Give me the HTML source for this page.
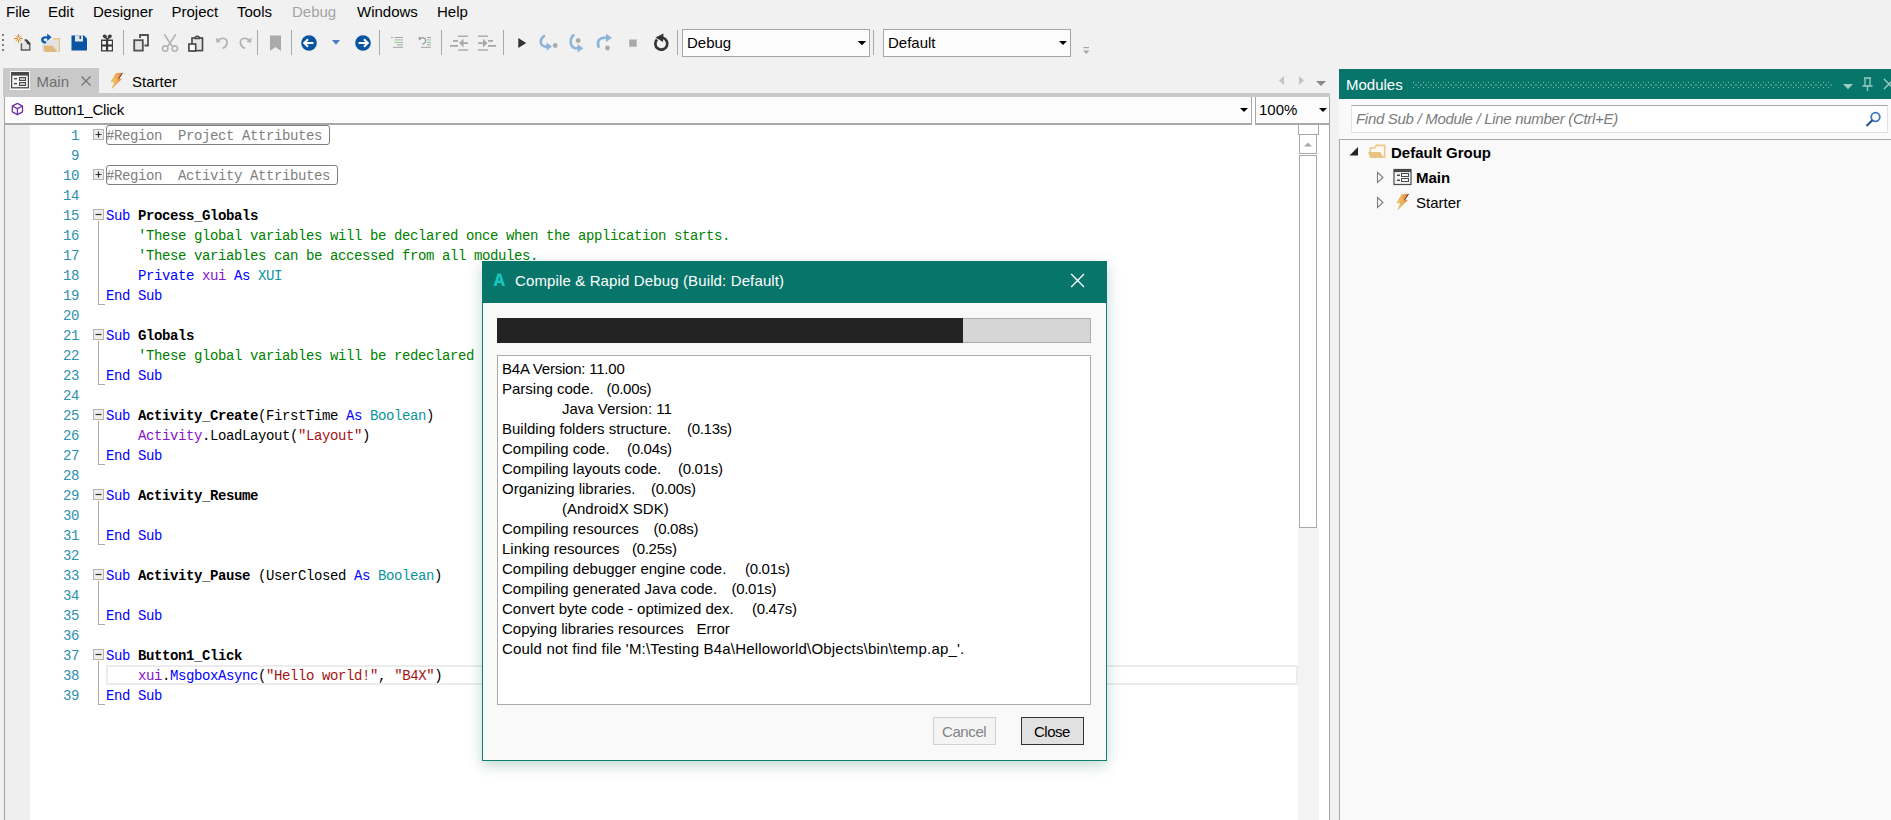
<!DOCTYPE html><html><head><meta charset="utf-8"><style>
*{margin:0;padding:0;box-sizing:border-box}
html,body{width:1891px;height:820px;overflow:hidden;background:#f1f1f1;font-family:"Liberation Sans",sans-serif;font-size:14.5px;color:#000}
.a{position:absolute;white-space:pre}
.ui{font-family:"Liberation Sans",sans-serif;font-size:15px;line-height:17px}
.code{position:absolute;left:106px;font-family:"Liberation Mono",monospace;font-size:14px;letter-spacing:-0.4px;line-height:20px;height:20px;white-space:pre;color:#000}
.ln{position:absolute;left:40px;width:39px;text-align:right;font-family:"Liberation Mono",monospace;font-size:14px;letter-spacing:-0.4px;line-height:20px;color:#2b91af;white-space:pre}
.kw{color:#0000ff}.cm{color:#008000}.st{color:#a31515}.ty{color:#0c949b}.pu{color:#8515c7}.b{font-weight:bold}.rg{color:#808080}
.fold{position:absolute;left:93px;width:11px;height:11px;border:1px solid #b5b5b5;background:#ededed}
.log{position:absolute;left:502px;font-size:14.5px;line-height:20px;white-space:pre}
</style></head><body>
<div class="a ui" style="left:6px;top:3px;color:#000">File</div>
<div class="a ui" style="left:48px;top:3px;color:#000">Edit</div>
<div class="a ui" style="left:93px;top:3px;color:#000">Designer</div>
<div class="a ui" style="left:171.5px;top:3px;color:#000">Project</div>
<div class="a ui" style="left:237px;top:3px;color:#000">Tools</div>
<div class="a ui" style="left:292px;top:3px;color:#a3a3a3">Debug</div>
<div class="a ui" style="left:357px;top:3px;color:#000">Windows</div>
<div class="a ui" style="left:437px;top:3px;color:#000">Help</div>
<svg class="a" style="left:0;top:0" width="1100" height="62" viewBox="0 0 1100 62">
<g fill="#7e7e7e"><rect x="2" y="34" width="2" height="2"/><rect x="2" y="39" width="2" height="2"/><rect x="2" y="44" width="2" height="2"/><rect x="2" y="49" width="2" height="2"/></g>
<!-- new -->
<g stroke="#d4862a" stroke-width="1.2"><line x1="18.5" y1="34.2" x2="18.5" y2="42.8"/><line x1="14.2" y1="38.5" x2="22.8" y2="38.5"/></g>
<g stroke="#e2a458" stroke-width="1"><line x1="15.6" y1="35.6" x2="21.4" y2="41.4"/><line x1="21.4" y1="35.6" x2="15.6" y2="41.4"/></g>
<circle cx="18.5" cy="38.5" r="0.9" fill="#fff"/>
<path d="M21.4 43.2 V50 H29.8 V43.6 L26.6 40.3 H24.6" fill="#e4e4e4" stroke="#5c5c5c" stroke-width="1.4"/>
<path d="M24.6 39.6 H26.8 L30.2 43 V44.5 H27.6 Z" fill="#444"/>
<!-- open -->
<path d="M42.3 40.2 H58.4 V51.9 H42.3 Z" fill="#e2e2e2"/>
<path d="M52.5 38.7 H59.3 V52" fill="none" stroke="#e3c38e" stroke-width="1.4"/>
<path d="M43.3 45.7 H52.8 L57.2 52 H44.8 Z" fill="#e0b878"/>
<path d="M45.2 42.4 C41.3 41.8 41.2 37.6 45.6 37.4 H48.2" stroke="#0f5eb0" stroke-width="2.4" fill="none" stroke-linecap="round"/>
<path d="M47.2 33.6 L51.6 37.3 L47.2 41 Z" fill="#0f5eb0"/>
<!-- save -->
<path d="M71.5 35.5 H84 L87 38.5 V50.5 H71.5 Z" fill="#0a54a4"/>
<rect x="75" y="35.5" width="8" height="6" fill="#e6e6e6"/><rect x="79.5" y="36" width="1.6" height="3" fill="#0a54a4"/>
<!-- gift -->
<path d="M101 39.5 H113 V51.5 H101 Z" fill="#3c3c3c"/>
<g fill="#fff"><rect x="102.3" y="41" width="3.6" height="3.4"/><rect x="108.2" y="41" width="3.6" height="3.4"/><rect x="102.3" y="46.6" width="3.6" height="3.6"/><rect x="108.2" y="46.6" width="3.6" height="3.6"/></g>
<ellipse cx="104.8" cy="36.4" rx="2.1" ry="1.7" fill="#3c3c3c" transform="rotate(25 104.8 36.4)"/><ellipse cx="109.8" cy="36.4" rx="2.1" ry="1.7" fill="#3c3c3c" transform="rotate(-25 109.8 36.4)"/><path d="M107.3 39.5 L104.8 36.4 M107.3 39.5 L109.8 36.4" stroke="#3c3c3c" stroke-width="1.6"/>
<!-- separators -->
<g fill="#a9a9a9"><rect x="123" y="30" width="1" height="25"/><rect x="257" y="30" width="1" height="25"/><rect x="291" y="30" width="1" height="25"/><rect x="379" y="30" width="1" height="25"/><rect x="441" y="30" width="1" height="25"/><rect x="503" y="30" width="1" height="25"/><rect x="677" y="30" width="1" height="25"/><rect x="873" y="30" width="1" height="25"/></g>
<!-- copy -->
<path d="M140 38 V35 H148 V45.5 H144.5" fill="none" stroke="#505050" stroke-width="1.8"/>
<rect x="134.2" y="40.2" width="8.6" height="10.4" fill="#e4e4e4" stroke="#505050" stroke-width="1.8"/>
<!-- cut -->
<g stroke="#b4b4b4" stroke-width="1.6" fill="none"><path d="M164.2 34.2 L172.2 46.2 M175.8 34.2 L167.8 46.2"/><circle cx="165.2" cy="48.6" r="2.7"/><circle cx="174.8" cy="48.6" r="2.7"/></g>
<!-- paste -->
<rect x="192" y="38" width="10.5" height="12.6" fill="#e6e6e6" stroke="#454545" stroke-width="1.6"/>
<path d="M195.2 38.6 V37.2 A3 3 0 0 1 199.4 37.2 V38.6 Z" fill="#e6e6e6" stroke="#454545" stroke-width="1.5"/>
<rect x="188.9" y="44" width="6.8" height="7" fill="#f8f8f8" stroke="#454545" stroke-width="1.6"/>
<!-- undo/redo -->
<path d="M217.5 41 C221 36.5 228 38 227 43.5 C226.5 46 224.5 47.5 222.5 48.5" fill="none" stroke="#b4b4b4" stroke-width="1.8"/>
<path d="M216 37.5 L216.5 43 L221 41.5 Z" fill="#b4b4b4"/>
<path d="M250 41 C246.5 36.5 239.5 38 240.5 43.5 C241 46 243 47.5 245 48.5" fill="none" stroke="#b4b4b4" stroke-width="1.8"/>
<path d="M251.5 37.5 L251 43 L246.5 41.5 Z" fill="#b4b4b4"/>
<!-- bookmark -->
<path d="M270 35.5 H281 V51 L275.5 47 L270 51 Z" fill="#aaaaaa"/>
<!-- back/forward -->
<circle cx="309" cy="43" r="7.8" fill="#0a54a4"/>
<path d="M304.2 43 H313.5 M308 39.2 L304.2 43 L308 46.8" stroke="#fff" stroke-width="2" fill="none"/>
<path d="M332 40 H340 L336 44.8 Z" fill="#4b7ec2"/>
<circle cx="363" cy="43" r="7.8" fill="#0a54a4"/>
<path d="M358.5 43 H367.8 M364 39.2 L367.8 43 L364 46.8" stroke="#fff" stroke-width="2" fill="none"/>
<!-- comment -->
<g stroke-width="1" fill="none">
<path d="M391 37.5 H393 M394.5 37.5 H403" stroke="#a3a3a3"/>
<path d="M394.5 39.9 H403 M394.5 42.4 H403" stroke="#8fc48f"/>
<path d="M397 44.8 H403 M393 47.3 H403" stroke="#a3a3a3"/>
<path d="M427 37.5 H431 M427 44.8 H431 M421 47.3 H431" stroke="#a3a3a3"/>
<path d="M427 39.9 H431 M427 42.4 H431" stroke="#8fc48f"/>
<path d="M420 38.5 C424 36 427 39.5 425 42.5 L422.5 44.5" stroke="#9a9a9a" stroke-width="1.2"/>
</g>
<path d="M418.5 36.5 L419 40.5 L422 38.5 Z" fill="#9a9a9a"/>
<!-- outdent / indent -->
<g fill="#a8a8a8">
<rect x="458" y="35.5" width="10" height="1.4"/><rect x="453" y="40" width="5" height="1.8"/><rect x="450" y="45" width="8" height="1.8"/><rect x="458" y="49.3" width="10" height="1.4"/>
<rect x="461" y="42.2" width="7" height="1.8"/><path d="M459 43.1 L463.5 38.8 V47.4 Z"/>
<rect x="478" y="35.5" width="10" height="1.4"/><rect x="488" y="40" width="5" height="1.8"/><rect x="488" y="45" width="8" height="1.8"/><rect x="478" y="49.3" width="10" height="1.4"/>
<rect x="478" y="42.2" width="7" height="1.8"/><path d="M487.5 43.1 L483 38.8 V47.4 Z"/>
</g>
<!-- play -->
<path d="M518.3 38 L526.2 43 L518.3 48 Z" fill="#333"/>
<!-- step over/into/out -->
<g fill="none" stroke="#8db4d9" stroke-width="2.6" stroke-linecap="round">
<path d="M544 36.2 C539.5 39 539.5 45.5 545 46.6 H547.5"/>
<path d="M573.5 35.3 C569.5 38.5 569.5 47.5 575.5 48.3 H578.5"/>
<path d="M598.6 46.8 C596.5 41.5 599.5 37.8 604.5 37.8 H607"/>
</g>
<g fill="#8db4d9"><path d="M546.5 42.5 L552 46.6 L546.5 50.7 Z"/><path d="M577.5 44.2 L583.5 48.3 L577.5 52.4 Z"/><path d="M606 33.7 L612 37.8 L606 41.9 Z"/></g>
<g fill="#a9a9a9"><circle cx="555.2" cy="45.5" r="2.4"/><circle cx="578.2" cy="40.6" r="2.4"/><circle cx="607.5" cy="48" r="2.4"/></g>
<rect x="629.2" y="39.5" width="7.5" height="7.2" fill="#aaaaaa"/>
<!-- restart -->
<path d="M657 39.5 A6 6 0 1 0 662.5 37.8" fill="none" stroke="#333" stroke-width="2.7"/>
<path d="M663.5 33.5 L655.5 37.5 L663 42 Z" fill="#333"/>
<!-- combo arrows -->
<path d="M858 41 H866 L862 45 Z" fill="#000"/>
<path d="M1059 41 H1067 L1063 45 Z" fill="#000"/>
<rect x="1083.5" y="47" width="5.5" height="1.2" fill="#a6a6a6"/>
<path d="M1083 50.5 H1089.5 L1086.25 54 Z" fill="#a6a6a6"/>
</svg>
<div class="a" style="left:682px;top:29px;width:188px;height:28px;border:1px solid #a5a5a5;background:#fcfcfc"></div>
<svg class="a" style="left:0;top:0" width="1100" height="62"><path d="M858 41 H866 L862 45 Z" fill="#000"/><path d="M1059 41 H1067 L1063 45 Z" fill="#000"/></svg>
<div class="a ui" style="left:687px;top:34px">Debug</div>
<div class="a" style="left:883px;top:29px;width:188px;height:28px;border:1px solid #a5a5a5;background:#fcfcfc"></div>
<svg class="a" style="left:0;top:0" width="1100" height="62"><path d="M858 41 H866 L862 45 Z" fill="#000"/><path d="M1059 41 H1067 L1063 45 Z" fill="#000"/></svg>
<div class="a ui" style="left:888px;top:34px">Default</div>
<div class="a" style="left:3px;top:68px;width:96px;height:25px;background:#c9c9c9"></div>
<div class="a" style="left:3px;top:93px;width:1327px;height:4px;background:#c9c9c9"></div>
<svg class="a" style="left:0;top:60px" width="1340" height="36" viewBox="0 60 1340 36">
<rect x="10" y="71" width="20" height="19" fill="#fff"/>
<rect x="11.6" y="72.6" width="16.8" height="15.2" fill="#f8f8f8" stroke="#484848" stroke-width="1.3"/>
<rect x="11" y="72" width="18" height="3.6" fill="#484848"/>
<g fill="#484848"><rect x="14" y="78" width="3" height="1.4"/><rect x="14" y="83" width="3" height="1.4"/></g>
<g fill="#c6c6c6" stroke="#484848" stroke-width="1"><rect x="19.5" y="77.5" width="6" height="3"/><rect x="19.5" y="82.5" width="6" height="3"/></g>
<path d="M81.5 76.5 L90.5 85.5 M90.5 76.5 L81.5 85.5" stroke="#777" stroke-width="1.4"/>
<defs><linearGradient id="lg" x1="0" y1="0" x2="1" y2="0"><stop offset="0" stop-color="#e9d65a"/><stop offset="0.55" stop-color="#f6a25a"/><stop offset="1" stop-color="#ec5a4a"/></linearGradient></defs>
<path d="M116 73.5 L122.5 73 L118.5 79 L121.5 79 L112 88.5 L114.8 81.8 L111 81.8 Z" fill="url(#lg)" stroke="#caa040" stroke-width="0.5"/>
<path d="M122.5 73 L118.5 79" stroke="#554422" stroke-width="1"/>
<path d="M1284 76 V85 L1279 80.5 Z" fill="#c4c4c4"/>
<path d="M1299 76 V85 L1304 80.5 Z" fill="#c4c4c4"/>
<path d="M1316 81 H1326 L1321 86 Z" fill="#8a8a8a"/>
</svg>
<div class="a ui" style="left:36.5px;top:73px;color:#6f6f6f">Main</div>
<div class="a ui" style="left:132px;top:73px">Starter</div>
<div class="a" style="left:4px;top:97px;width:1326px;height:723px;background:#fff;border-left:1px solid #a0a0a0;border-right:1px solid #a0a0a0"></div>
<div class="a" style="left:5px;top:125px;width:25px;height:695px;background:#efefef"></div>
<div class="a" style="left:4px;top:97px;width:1248px;height:28px;background:#fcfcfc;border-left:1px solid #a8a8a8;border-right:1px solid #a8a8a8;border-bottom:2px solid #a8a8a8"></div>
<div class="a" style="left:1255px;top:97px;width:75px;height:28px;background:#fcfcfc;border-left:1px solid #a8a8a8;border-right:1px solid #a8a8a8;border-bottom:2px solid #a8a8a8"></div>
<svg class="a" style="left:0;top:96px" width="1340" height="32" viewBox="0 96 1340 32">
<g fill="none" stroke="#6d2ea6" stroke-width="1.25" stroke-linejoin="round"><path d="M17.4 103.4 L22.5 106.1 V111.9 L17.4 114.6 L12.3 111.9 V106.1 Z"/><path d="M12.6 106.3 L17.4 108.6 L22.2 106.3 M17.4 108.6 V114.4"/></g>
<path d="M1240 108 H1248 L1244 112 Z" fill="#000"/>
<path d="M1319 108 H1327 L1323 112 Z" fill="#000"/>
</svg>
<div class="a ui" style="left:34px;top:101px;letter-spacing:-0.2px">Button1_Click</div>
<div class="a ui" style="left:1259px;top:101px">100%</div>
<div class="a" style="left:1298px;top:125px;width:21px;height:10px;border:1px solid #a8a8a8;border-top:0;background:#fff"></div>
<div class="a" style="left:1299px;top:134px;width:18px;height:20px;border:1px solid #a8a8a8;background:#fff"></div>
<svg class="a" style="left:1299px;top:134px" width="18" height="20"><path d="M5 12.5 H13 L9 8.5 Z" fill="#a6a6a6"/></svg>
<div class="a" style="left:1299px;top:155px;width:18px;height:373px;border:1px solid #a8a8a8;background:#fff"></div>
<div class="a" style="left:1298px;top:528px;width:21px;height:292px;background:#f3f3f3"></div>
<div class="a" style="left:106px;top:665px;width:1192px;height:20px;border:2px solid #ececec"></div>
<div class="ln" style="top:126px">1</div>
<div class="a" style="left:106px;top:125px;width:224px;height:20px;border:1px solid #7d7d7d;border-radius:3px"></div>
<div class="code rg" style="top:126px">#Region  Project Attributes</div>
<div class="fold" style="top:129px"></div>
<svg class="a" style="left:93px;top:129px" width="11" height="11"><path d="M2.5 5.5 H8.5 M5.5 2.5 V8.5" stroke="#333" stroke-width="1.2"/></svg>
<div class="ln" style="top:146px">9</div>
<div class="ln" style="top:166px">10</div>
<div class="a" style="left:106px;top:165px;width:232px;height:20px;border:1px solid #7d7d7d;border-radius:3px"></div>
<div class="code rg" style="top:166px">#Region  Activity Attributes</div>
<div class="fold" style="top:169px"></div>
<svg class="a" style="left:93px;top:169px" width="11" height="11"><path d="M2.5 5.5 H8.5 M5.5 2.5 V8.5" stroke="#333" stroke-width="1.2"/></svg>
<div class="ln" style="top:186px">14</div>
<div class="ln" style="top:206px">15</div>
<div class="code" style="top:206px"><span class="kw">Sub </span><span class="b">Process_Globals</span></div>
<div class="ln" style="top:226px">16</div>
<div class="code" style="top:226px">    <span class="cm">'These global variables will be declared once when the application starts.</span></div>
<div class="ln" style="top:246px">17</div>
<div class="code" style="top:246px">    <span class="cm">'These variables can be accessed from all modules.</span></div>
<div class="ln" style="top:266px">18</div>
<div class="code" style="top:266px">    <span class="kw">Private </span><span class="pu">xui</span> <span class="kw">As </span><span class="ty">XUI</span></div>
<div class="ln" style="top:286px">19</div>
<div class="code" style="top:286px"><span class="kw">End Sub</span></div>
<div class="ln" style="top:306px">20</div>
<div class="ln" style="top:326px">21</div>
<div class="code" style="top:326px"><span class="kw">Sub </span><span class="b">Globals</span></div>
<div class="ln" style="top:346px">22</div>
<div class="code" style="top:346px">    <span class="cm">'These global variables will be redeclared each time the activity is created.</span></div>
<div class="ln" style="top:366px">23</div>
<div class="code" style="top:366px"><span class="kw">End Sub</span></div>
<div class="ln" style="top:386px">24</div>
<div class="ln" style="top:406px">25</div>
<div class="code" style="top:406px"><span class="kw">Sub </span><span class="b">Activity_Create</span>(FirstTime <span class="kw">As </span><span class="ty">Boolean</span>)</div>
<div class="ln" style="top:426px">26</div>
<div class="code" style="top:426px">    <span class="pu">Activity</span>.LoadLayout(<span class="st">"Layout"</span>)</div>
<div class="ln" style="top:446px">27</div>
<div class="code" style="top:446px"><span class="kw">End Sub</span></div>
<div class="ln" style="top:466px">28</div>
<div class="ln" style="top:486px">29</div>
<div class="code" style="top:486px"><span class="kw">Sub </span><span class="b">Activity_Resume</span></div>
<div class="ln" style="top:506px">30</div>
<div class="ln" style="top:526px">31</div>
<div class="code" style="top:526px"><span class="kw">End Sub</span></div>
<div class="ln" style="top:546px">32</div>
<div class="ln" style="top:566px">33</div>
<div class="code" style="top:566px"><span class="kw">Sub </span><span class="b">Activity_Pause</span> (UserClosed <span class="kw">As </span><span class="ty">Boolean</span>)</div>
<div class="ln" style="top:586px">34</div>
<div class="ln" style="top:606px">35</div>
<div class="code" style="top:606px"><span class="kw">End Sub</span></div>
<div class="ln" style="top:626px">36</div>
<div class="ln" style="top:646px">37</div>
<div class="code" style="top:646px"><span class="kw">Sub </span><span class="b">Button1_Click</span></div>
<div class="ln" style="top:666px">38</div>
<div class="code" style="top:666px">    <span class="pu">xui</span>.<span class="kw">MsgboxAsync</span>(<span class="st">"Hello world!"</span>, <span class="st">"B4X"</span>)</div>
<div class="ln" style="top:686px">39</div>
<div class="code" style="top:686px"><span class="kw">End Sub</span></div>
<div class="fold" style="top:209px"></div>
<svg class="a" style="left:93px;top:209px" width="11" height="11"><path d="M2.5 5.5 H8.5" stroke="#333" stroke-width="1.2"/></svg>
<div class="a" style="left:98px;top:221px;width:1px;height:83px;background:#ababab"></div>
<div class="a" style="left:98px;top:304px;width:7px;height:1px;background:#ababab"></div>
<div class="fold" style="top:329px"></div>
<svg class="a" style="left:93px;top:329px" width="11" height="11"><path d="M2.5 5.5 H8.5" stroke="#333" stroke-width="1.2"/></svg>
<div class="a" style="left:98px;top:341px;width:1px;height:43px;background:#ababab"></div>
<div class="a" style="left:98px;top:384px;width:7px;height:1px;background:#ababab"></div>
<div class="fold" style="top:409px"></div>
<svg class="a" style="left:93px;top:409px" width="11" height="11"><path d="M2.5 5.5 H8.5" stroke="#333" stroke-width="1.2"/></svg>
<div class="a" style="left:98px;top:421px;width:1px;height:43px;background:#ababab"></div>
<div class="a" style="left:98px;top:464px;width:7px;height:1px;background:#ababab"></div>
<div class="fold" style="top:489px"></div>
<svg class="a" style="left:93px;top:489px" width="11" height="11"><path d="M2.5 5.5 H8.5" stroke="#333" stroke-width="1.2"/></svg>
<div class="a" style="left:98px;top:501px;width:1px;height:43px;background:#ababab"></div>
<div class="a" style="left:98px;top:544px;width:7px;height:1px;background:#ababab"></div>
<div class="fold" style="top:569px"></div>
<svg class="a" style="left:93px;top:569px" width="11" height="11"><path d="M2.5 5.5 H8.5" stroke="#333" stroke-width="1.2"/></svg>
<div class="a" style="left:98px;top:581px;width:1px;height:43px;background:#ababab"></div>
<div class="a" style="left:98px;top:624px;width:7px;height:1px;background:#ababab"></div>
<div class="fold" style="top:649px"></div>
<svg class="a" style="left:93px;top:649px" width="11" height="11"><path d="M2.5 5.5 H8.5" stroke="#333" stroke-width="1.2"/></svg>
<div class="a" style="left:98px;top:661px;width:1px;height:43px;background:#ababab"></div>
<div class="a" style="left:98px;top:704px;width:7px;height:1px;background:#ababab"></div>
<div class="a" style="left:1339px;top:69px;width:552px;height:30px;background:#08756a"></div>
<svg class="a" style="left:1413px;top:82px" width="420" height="6"><defs><pattern id="gp" width="5" height="5" patternUnits="userSpaceOnUse"><rect x="0" y="0" width="1" height="1" fill="#86beb6"/><rect x="2" y="2" width="2" height="2" fill="#3f9488"/></pattern></defs><rect x="0" y="0" width="419" height="6" fill="url(#gp)"/></svg>
<svg class="a" style="left:1830px;top:69px" width="61" height="30" viewBox="1830 69 61 30">
<path d="M1843 84 H1853 L1848 89.2 Z" fill="#9ccdc6"/>
<g fill="none" stroke="#9ccdc6" stroke-width="1.3"><path d="M1865 78.5 V85.5 M1870 78.5 V85.5 M1864 78 H1871 M1862.5 86 H1872.5 M1867.5 86 V91"/></g>
<path d="M1884 79 L1894 89 M1894 79 L1884 89" stroke="#9ccdc6" stroke-width="1.4"/>
</svg>
<div class="a ui" style="left:1346px;top:76px;color:#fff">Modules</div>
<div class="a" style="left:1339px;top:99px;width:552px;height:721px;background:#f9f9f9"></div>
<div class="a" style="left:1351px;top:105px;width:537px;height:28px;background:#fff;border:1px solid #dfe3ea;border-top-color:#a8a8a8"></div>
<div class="a ui" style="left:1356px;top:110px;font-style:italic;color:#7b7b7b;letter-spacing:-0.3px">Find Sub / Module / Line number (Ctrl+E)</div>
<svg class="a" style="left:1860px;top:108px" width="26" height="24" viewBox="1860 108 26 24">
<circle cx="1875.5" cy="117" r="4.3" fill="none" stroke="#3b78c4" stroke-width="1.8"/>
<path d="M1872.5 120 L1866.5 126" stroke="#2a4f8a" stroke-width="2.2"/>
</svg>
<div class="a" style="left:1339px;top:139px;width:552px;height:681px;border-top:1px solid #a8a8a8;border-left:1px solid #a8a8a8;background:#f9f9f9"></div>
<svg class="a" style="left:1340px;top:140px" width="90" height="80" viewBox="1340 140 90 80">
<path d="M1358 147 V155.5 H1349.5 Z" fill="#222"/>
<path d="M1370.3 157 V148 H1374.5 L1376.5 145.4 H1384.7 V157 Z" fill="#fdfaf3" stroke="#ecc98b" stroke-width="1.6"/>
<path d="M1368 152 H1380.5 L1383.5 158 H1370.5 Z" fill="#e8c383"/>
<path d="M1377.5 172.5 L1383 177.5 L1377.5 182.5 Z" fill="none" stroke="#7d7d7d" stroke-width="1.1"/>
<path d="M1377.5 197.5 L1383 202.5 L1377.5 207.5 Z" fill="none" stroke="#7d7d7d" stroke-width="1.1"/>
<rect x="1394" y="169.5" width="17" height="15" fill="#f4f4f4" stroke="#4a4a4a" stroke-width="1.2"/>
<rect x="1394" y="169.5" width="17" height="2.6" fill="#4a4a4a"/>
<g fill="#4a4a4a"><rect x="1397" y="174.5" width="3" height="1.5"/><rect x="1397" y="179.5" width="3" height="1.5"/></g>
<g fill="none" stroke="#4a4a4a" stroke-width="1"><rect x="1401.5" y="173.5" width="7" height="3"/><rect x="1401.5" y="178.5" width="7" height="3"/></g>
<path d="M1402 194.5 L1408.5 194 L1404.5 200 L1407.5 200 L1398 209.5 L1400.8 202.8 L1397 202.8 Z" fill="url(#lg2)" stroke="#caa040" stroke-width="0.5"/>
<path d="M1408.5 194 L1404.5 200" stroke="#554422" stroke-width="1"/>
<defs><linearGradient id="lg2" x1="0" y1="0" x2="1" y2="0"><stop offset="0" stop-color="#e9d65a"/><stop offset="0.55" stop-color="#f6a25a"/><stop offset="1" stop-color="#ec5a4a"/></linearGradient></defs>
</svg>
<div class="a ui" style="left:1391px;top:144px;font-weight:bold">Default Group</div>
<div class="a ui" style="left:1416px;top:169px;font-weight:bold">Main</div>
<div class="a ui" style="left:1416px;top:194px">Starter</div>
<div class="a" style="left:482px;top:261px;width:625px;height:500px;background:#f9f9f9;border:1px solid #10806f;box-shadow:0 4px 13px rgba(0,105,90,.26)"></div>
<div class="a" style="left:482px;top:261px;width:625px;height:42px;background:#08756a"></div>
<svg class="a" style="left:482px;top:261px" width="625" height="42" viewBox="482 261 625 42">
<path fill-rule="evenodd" d="M493.5 286 L497.6 273.5 H500.9 L505 286 H502 L501.1 283 H497.4 L496.5 286 Z M498.1 280.6 H500.4 L499.25 276.6 Z" fill="#17c4ba"/>
<path d="M1071.2 274 L1084 287 M1084 274 L1071.2 287" stroke="#fff" stroke-width="1.3"/>
</svg>
<div class="a ui" style="left:515px;top:272px;color:#fff;letter-spacing:0.13px">Compile &amp; Rapid Debug (Build: Default)</div>
<div class="a" style="left:497px;top:318px;width:594px;height:25px;background:#d6d6d6;border:1px solid #adadad"></div>
<div class="a" style="left:497px;top:318px;width:466px;height:25px;background:#232323"></div>
<div class="a" style="left:497px;top:355px;width:594px;height:350px;background:#fff;border:1px solid #ababab"></div>
<div class="a ui" style="left:502px;top:360px;letter-spacing:-0.22px">B4A Version: 11.00</div>
<div class="a ui" style="left:502px;top:380px;letter-spacing:0px">Parsing code.</div>
<div class="a ui" style="left:606.5px;top:380px;letter-spacing:-0.3px">(0.00s)</div>
<div class="a ui" style="left:562px;top:400px;letter-spacing:0px">Java Version: 11</div>
<div class="a ui" style="left:502px;top:420px;letter-spacing:0px">Building folders structure.</div>
<div class="a ui" style="left:687px;top:420px;letter-spacing:-0.3px">(0.13s)</div>
<div class="a ui" style="left:502px;top:440px;letter-spacing:0px">Compiling code.</div>
<div class="a ui" style="left:627px;top:440px;letter-spacing:-0.3px">(0.04s)</div>
<div class="a ui" style="left:502px;top:460px;letter-spacing:0px">Compiling layouts code.</div>
<div class="a ui" style="left:678px;top:460px;letter-spacing:-0.3px">(0.01s)</div>
<div class="a ui" style="left:502px;top:480px;letter-spacing:0px">Organizing libraries.</div>
<div class="a ui" style="left:651px;top:480px;letter-spacing:-0.3px">(0.00s)</div>
<div class="a ui" style="left:562px;top:500px;letter-spacing:0px">(AndroidX SDK)</div>
<div class="a ui" style="left:502px;top:520px;letter-spacing:0px">Compiling resources</div>
<div class="a ui" style="left:653.5px;top:520px;letter-spacing:-0.3px">(0.08s)</div>
<div class="a ui" style="left:502px;top:540px;letter-spacing:0px">Linking resources</div>
<div class="a ui" style="left:632px;top:540px;letter-spacing:-0.3px">(0.25s)</div>
<div class="a ui" style="left:502px;top:560px;letter-spacing:0px">Compiling debugger engine code.</div>
<div class="a ui" style="left:745px;top:560px;letter-spacing:-0.3px">(0.01s)</div>
<div class="a ui" style="left:502px;top:580px;letter-spacing:0px">Compiling generated Java code.</div>
<div class="a ui" style="left:731.5px;top:580px;letter-spacing:-0.3px">(0.01s)</div>
<div class="a ui" style="left:502px;top:600px;letter-spacing:0px">Convert byte code - optimized dex.</div>
<div class="a ui" style="left:752px;top:600px;letter-spacing:-0.3px">(0.47s)</div>
<div class="a ui" style="left:502px;top:620px;letter-spacing:0px">Copying libraries resources</div>
<div class="a ui" style="left:696.5px;top:620px;letter-spacing:0px">Error</div>
<div class="a ui" style="left:502px;top:640px;letter-spacing:0.19px">Could not find file 'M:\Testing B4a\Helloworld\Objects\bin\temp.ap_'.</div>
<div class="a" style="left:933px;top:717px;width:63px;height:28px;background:#f4f4f4;border:1px solid #cfcfcf"></div>
<div class="a ui" style="left:942px;top:723px;color:#838383;letter-spacing:-0.4px">Cancel</div>
<div class="a" style="left:1021px;top:717px;width:63px;height:28px;background:#e1e1e1;border:1px solid #333"></div>
<div class="a ui" style="left:1034px;top:723px;letter-spacing:-0.5px">Close</div>
</body></html>
